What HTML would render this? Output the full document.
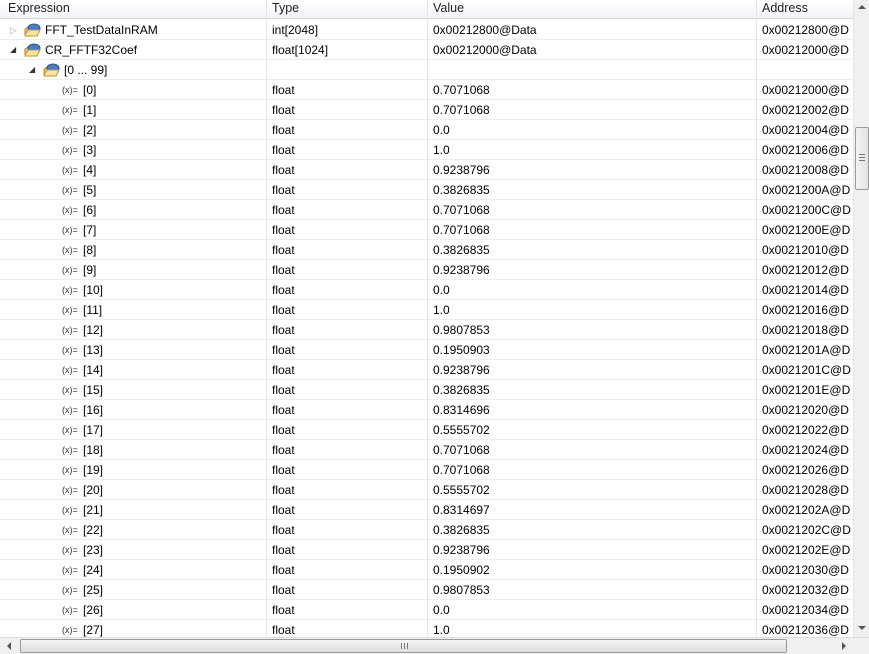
<!DOCTYPE html>
<html><head><style>
*{margin:0;padding:0;box-sizing:border-box}
body{width:869px;height:654px;overflow:hidden;background:#fff;font-family:"Liberation Sans",Arial,sans-serif;font-size:12px;color:#000;position:relative}
.hdr{position:absolute;left:0;top:0;width:853px;height:19px;background:linear-gradient(#fff,#f3f4f6);border-bottom:1px solid #d5d5d5}
.hdr span{position:absolute;top:0;line-height:17px;font-size:12.5px;color:#1e1e1e}
.vl{position:absolute;top:0;width:1px;height:637px;background:#e6e6e6}
.row{position:absolute;left:0;width:853px;height:20px;border-bottom:1px solid #ececec;overflow:hidden}
.row span{position:absolute;top:0;line-height:20px;white-space:nowrap}
.x{font-size:9px;color:#333}
.vs{position:absolute;left:853px;top:0;width:16px;height:637px;background:#f0f0f0;border-left:1px solid #e6e6e6}
.thumb{position:absolute;left:1px;top:127px;width:14px;height:63px;border:1px solid #9a9a9a;border-radius:2px;background:linear-gradient(90deg,#f3f3f3,#e2e2e2)}
.hs{position:absolute;left:0;top:637px;width:869px;height:17px;background:#f0f0f0;border-top:1px solid #dcdcdc}
.hthumb{position:absolute;left:20px;top:1px;width:767px;height:14px;border:1px solid #9a9a9a;border-radius:2px;background:linear-gradient(#f5f5f5,#dedede)}
</style></head><body>
<div class="hdr"><span style="left:8px">Expression</span><span style="left:272px">Type</span><span style="left:433px">Value</span><span style="left:762px">Address</span></div>
<div class="vl" style="left:266px"></div><div class="vl" style="left:427px"></div><div class="vl" style="left:756px"></div>
<div id="rows"></div>
<div class="vs"><div style="position:absolute;left:4px;top:5px;width:0;height:0;border-left:4px solid transparent;border-right:4px solid transparent;border-bottom:4px solid #555"></div><div class="thumb"><div style="position:absolute;left:3px;top:26px;width:6px;height:7px;border-top:1px solid #777;border-bottom:1px solid #777"></div><div style="position:absolute;left:3px;top:29px;width:6px;height:1px;background:#777"></div></div><div style="position:absolute;left:4px;top:626px;border-left:4px solid transparent;border-right:4px solid transparent;border-top:4px solid #555"></div></div>
<div class="hs"><div style="position:absolute;left:7px;top:4px;border-top:4px solid transparent;border-bottom:4px solid transparent;border-right:4px solid #555"></div><div class="hthumb"><div style="position:absolute;left:380px;top:3px;width:7px;height:6px;border-left:1px solid #777;border-right:1px solid #777"></div><div style="position:absolute;left:383px;top:3px;width:1px;height:6px;background:#777"></div></div><div style="position:absolute;left:842px;top:4px;border-top:4px solid transparent;border-bottom:4px solid transparent;border-left:4px solid #555"></div></div>
<script>
var f='<svg width="17" height="16" style="position:absolute;top:2px" viewBox="0 0 17 16"><path d="M1 7 L4 5 L8 5 L8 13 L1 13Z" fill="#f3c46a" stroke="#b58a2e"/><ellipse cx="10" cy="6" rx="6" ry="4" fill="#4a7bc4" stroke="#2c5590"/><path d="M1 13 L4 8 L16 8 L13 14 L1 14Z" fill="#fbe3a0" stroke="#c09438"/></svg>';
var h='';
function row(i,exp,t,v,a){h+='<div class="row" style="top:'+(20+i*20)+'px">'+exp+'<span style="left:272px">'+t+'</span><span style="left:433px">'+v+'</span><span style="left:762px">'+a+'</span></div>';}
row(0,'<span style="left:10px;color:#aaa;font-size:9px">&#9655;</span><span style="left:24px">'+f+'</span><span style="left:45px">FFT_TestDataInRAM</span>','int[2048]','0x00212800@Data','0x00212800@D');
row(1,'<span style="left:10px;color:#333;font-size:8px">&#9698;</span><span style="left:24px">'+f+'</span><span style="left:45px">CR_FFTF32Coef</span>','float[1024]','0x00212000@Data','0x00212000@D');
row(2,'<span style="left:29px;color:#333;font-size:8px">&#9698;</span><span style="left:43px">'+f+'</span><span style="left:64px">[0 ... 99]</span>','','','');
var v=["0.7071068","0.7071068","0.0","1.0","0.9238796","0.3826835","0.7071068","0.7071068","0.3826835","0.9238796","0.0","1.0","0.9807853","0.1950903","0.9238796","0.3826835","0.8314696","0.5555702","0.7071068","0.7071068","0.5555702","0.8314697","0.3826835","0.9238796","0.1950902","0.9807853","0.0","1.0"];
for(var i=0;i<28;i++){var ad=(0x212000+i*2).toString(16).toUpperCase();while(ad.length<8)ad='0'+ad;row(3+i,'<span class="x" style="left:62px">(x)=</span><span style="left:83px">['+i+']</span>','float',v[i],'0x'+ad+'@D');}
document.getElementById('rows').innerHTML=h;
</script>
</body></html>
